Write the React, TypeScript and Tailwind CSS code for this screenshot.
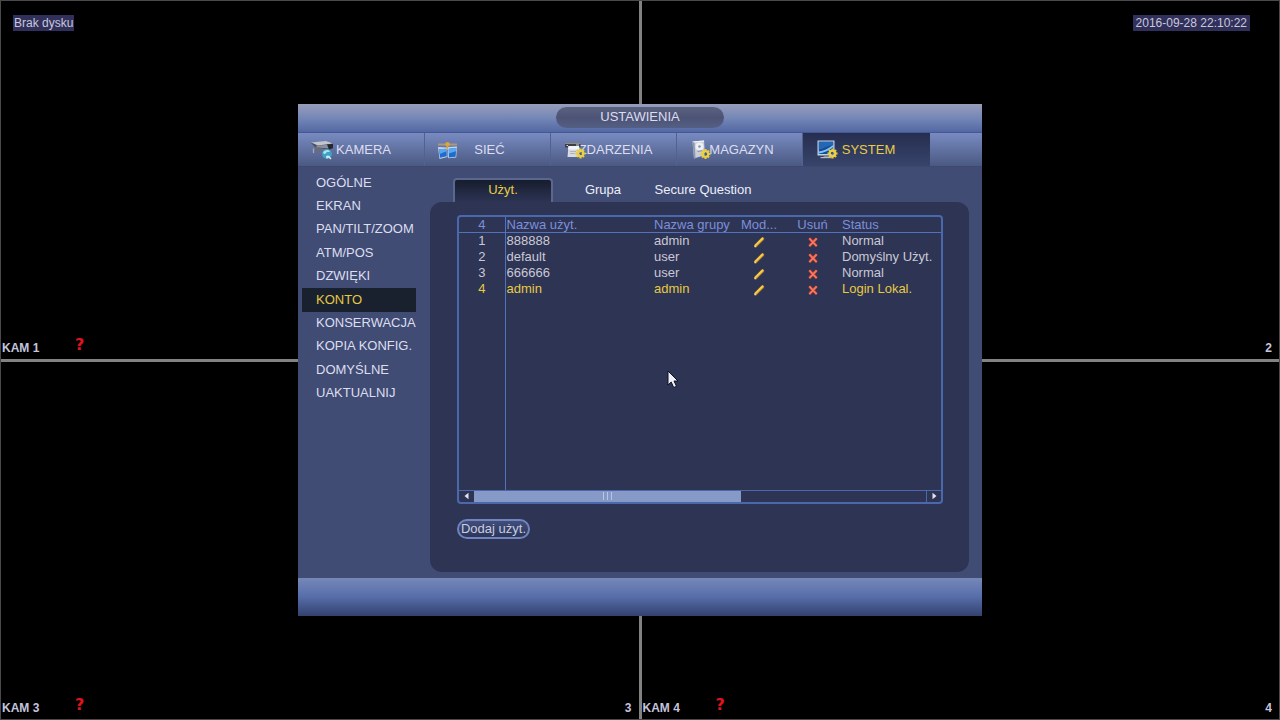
import React from 'react';

type IconProps = { className?: string };

const GEAR_TEETH = [0, 45, 90, 135, 180, 225, 270, 315];

const Gear = ({ cx, cy }: { cx: number; cy: number }) => (
  <g transform={`translate(${cx} ${cy})`}>
    {GEAR_TEETH.map((angle) => (
      <rect key={angle} x="-1.1" y="-5" width="2.2" height="3" fill="#e6c93a" transform={`rotate(${angle})`} />
    ))}
    <circle r="2.7" fill="none" stroke="#ecd23f" strokeWidth="1.9" />
    <circle r="1.2" fill="#4f5a70" />
  </g>
);

const CameraIcon: React.FC<IconProps> = ({ className }) => (
  <svg className={className} viewBox="0 0 24 24" aria-hidden="true">
    <path d="M0 4 16 2.500 22 5 22 9 18 11 4 8Z" fill="#4b4e5b" />
    <path d="M0 3.500 15 2 22 4.500 7 6.500Z" fill="#c3c5ce" />
    <path d="M5 6.800 20 5.500 19 9.500 6 8.500Z" fill="#8b8f9e" />
    <path d="M16 5.500 22 4.800V9L18 10.500Z" fill="#25262e" />
    <path d="M5 8.500 3.500 12 6 14 11 11.500 10 9Z" fill="#686b78" />
    <path d="M2.500 9.500V14" stroke="#a9acb6" strokeWidth="1.200" />
    <circle cx="16" cy="15" r="5" fill="#3f9fc4" />
    <path d="M12 13.500c2-3 5-3 7-1.500-1 2-3 0-4 2s-2 1-3-.5Z" fill="#a9e3ef" />
    <path d="M15 17c2-1 3-.5 4 .5-1 1.500-2.500 2-3.500 2Z" fill="#c5edf3" />
    <path d="m18 18 2 2" stroke="#dfe7ef" strokeWidth="1.500" />
  </svg>
);

const NetworkIcon: React.FC<IconProps> = ({ className }) => (
  <svg className={className} viewBox="0 0 24 24" aria-hidden="true">
    <path d="M1 4.500h19v2H1z" fill="#a99a78" />
    <circle cx="10.500" cy="5.300" r="2.300" fill="#dfa436" />
    <path d="M10.500 6v5" stroke="#dfa436" strokeWidth="1.500" />
    <path d="m1 8 9 .5.5 9.500L2.500 20Z" fill="#c6d3e6" />
    <path d="m2 10.200 7.500-.5.300 7.500L3 18.700Z" fill="#1c6dd0" />
    <path d="m2 10.200 7.500-.5v2.500L2.500 15Z" fill="#5ba7ee" />
    <path d="m11 8 9-.5-.8 11-8 .8Z" fill="#c6d3e6" />
    <path d="m11.800 9.700 7.500-.7-.7 8.700-6.600.8Z" fill="#1c6dd0" />
    <path d="m11.800 9.700 7.500-.7-.3 3.200-7.200 2.300Z" fill="#5ba7ee" />
  </svg>
);

const EventIcon: React.FC<IconProps> = ({ className }) => (
  <svg className={className} viewBox="0 0 24 24" aria-hidden="true">
    <path d="M2 3.500h15.500v5H2z" fill="#3c3e47" />
    <path d="M2 3.500h15.500v1.300H2z" fill="#9da1ad" />
    <path d="M3.500 6.500H5M13 6h3" stroke="#d9dbe2" strokeWidth="1" />
    <path d="M5.500 7H16l1.500 11H4.500Z" fill="#d8dbe2" />
    <path d="M5.500 7H16l.5 3.500H5Z" fill="#f3f4f7" />
    <path d="M7 12.500h6M7 14.500h5" stroke="#a3a8b5" strokeWidth=".8" />
    <Gear cx={17.500} cy={14.500} />
  </svg>
);

const StorageIcon: React.FC<IconProps> = ({ className }) => (
  <svg className={className} viewBox="0 0 24 24" aria-hidden="true">
    <path d="M3.500 2.500 15 1.500 16 16 5 19.500Z" fill="#c9ced9" />
    <path d="M3.500 2.500 5.500 3 6.500 19 5 19.500Z" fill="#8f98aa" />
    <path d="M3.500 2.500 15 1.500l.2 1.200L5 3.500Z" fill="#f2f4f8" />
    <circle cx="10.500" cy="7.500" r="4" fill="#edf0f5" />
    <circle cx="10.500" cy="7.500" r="1.300" fill="#8c94a5" />
    <path d="m8.500 12.500 5-.8" stroke="#8c94a5" strokeWidth="1.200" />
    <Gear cx={16.500} cy={15} />
  </svg>
);

const SystemIcon: React.FC<IconProps> = ({ className }) => (
  <svg className={className} viewBox="0 0 24 24" aria-hidden="true">
    <rect x="2.500" y="1.500" width="17" height="15" fill="#c3d3e6" />
    <rect x="3.800" y="2.700" width="14.400" height="12.300" fill="#164a94" />
    <path d="M3.800 2.700h14.400v3.500C12 6.500 9 10 3.800 10.500Z" fill="#2468b4" />
    <path d="M3.800 12.500c5-.5 9-3 14.400-6.500v2C13 12 9 14 3.800 14.500Z" fill="#7fc4f3" />
    <path d="M8.500 16.500h5V18h-5z" fill="#7e8798" />
    <path d="M5.500 18h11v1.200h-11z" fill="#b4bcc8" />
    <Gear cx={17.500} cy={14.500} />
  </svg>
);

const PencilIcon = () => (
  <svg className="h-3 w-3" viewBox="0 0 12 12" aria-hidden="true">
    <path d="M2.600 9.800 9.600 2.800" stroke="#b9812a" strokeWidth="3.200" strokeLinecap="round" />
    <path d="M2.500 9.400 9.400 2.500" stroke="#f2d04c" strokeWidth="1.900" strokeLinecap="round" />
    <path d="m1.500 10.600 1.500-.2" stroke="#ded5c2" strokeWidth="1.200" />
  </svg>
);

const DeleteIcon = () => (
  <svg className="h-3 w-3" viewBox="0 0 12 12" aria-hidden="true">
    <path d="m2.300 2.300 7.400 7.800M9.700 2.300 2.300 10.100" stroke="#a8352f" strokeWidth="3" />
    <path d="m2.300 2.300 7.400 7.800M9.700 2.300 2.300 10.100" stroke="#f47a62" strokeWidth="1.700" />
  </svg>
);

const sections = [
  { label: 'KAMERA', Icon: CameraIcon },
  { label: 'SIEĆ', Icon: NetworkIcon },
  { label: 'ZDARZENIA', Icon: EventIcon },
  { label: 'MAGAZYN', Icon: StorageIcon },
  { label: 'SYSTEM', Icon: SystemIcon, active: true },
];

const menu = [
  'OGÓLNE',
  'EKRAN',
  'PAN/TILT/ZOOM',
  'ATM/POS',
  'DZWIĘKI',
  'KONTO',
  'KONSERWACJA',
  'KOPIA KONFIG.',
  'DOMYŚLNE',
  'UAKTUALNIJ',
];

const tabs = ['Użyt.', 'Grupa', 'Secure Question'];

const users = [
  { id: 1, name: '888888', group: 'admin', status: 'Normal' },
  { id: 2, name: 'default', group: 'user', status: 'Domyślny Użyt.' },
  { id: 3, name: '666666', group: 'user', status: 'Normal' },
  { id: 4, name: 'admin', group: 'admin', status: 'Login Lokal.' },
];

interface CameraViewProps {
  name?: string;
  number?: string;
  children?: React.ReactNode;
}

const CameraView: React.FC<CameraViewProps> = ({ name, number, children }) => (
  <section className="flex flex-col justify-between bg-black text-xs font-bold text-[#c4c4dc]">
    <div className="flex px-3 pt-[14px] font-normal">{children}</div>
    <div className="flex items-end pb-1 pl-px pr-[7px] leading-[14px]">
      {name && (
        <>
          <span className="w-[73px]">{name}</span>
          <span className="pb-[2px] font-['DejaVu_Sans',sans-serif] text-base leading-4 text-[#e0141c]">?</span>
        </>
      )}
      <span className="ml-auto">{number}</span>
    </div>
  </section>
);

const UserTable = () => (
  <div className="overflow-hidden rounded-[4px] border-2 border-[#4c68ad]">
    <table className="w-full table-fixed border-collapse text-left text-[13px] leading-4 text-[#c9c9d6]">
      <colgroup>
        <col className="w-[46px]" />
        <col className="w-[148px]" />
        <col className="w-[81px]" />
        <col className="w-[50px]" />
        <col className="w-[57px]" />
        <col />
      </colgroup>
      <thead>
        <tr className="h-[15px] border-b border-[#5272bd] leading-[14px] text-[#7b8fdc]">
          <th className="border-r border-[#5272bd] p-0 text-center font-normal">4</th>
          <th className="p-0 pl-px font-normal">Nazwa użyt.</th>
          <th className="p-0 pl-px font-normal">Nazwa grupy</th>
          <th className="p-0 text-center font-normal">Mod...</th>
          <th className="p-0 text-center font-normal">Usuń</th>
          <th className="p-0 pl-px font-normal">Status</th>
        </tr>
      </thead>
      <tbody>
        {users.map((user) => (
          <tr key={user.id} className={user.id === 4 ? 'h-4 text-[#e6cb42]' : 'h-4'}>
            <td className="border-r border-[#5272bd] p-0 text-center">{user.id}</td>
            <td className="p-0 pl-px">{user.name}</td>
            <td className="p-0 pl-px">{user.group}</td>
            <td className="p-0">
              <button type="button" aria-label="Mod..." className="mx-auto block pt-[2px]">
                <PencilIcon />
              </button>
            </td>
            <td className="p-0">
              <button type="button" aria-label="Usuń" className="mx-auto block pt-[2px]">
                <DeleteIcon />
              </button>
            </td>
            <td className="whitespace-nowrap p-0 pl-px">{user.status}</td>
          </tr>
        ))}
        <tr className="h-[193px]">
          <td className="border-r border-[#5272bd] p-0" />
          <td colSpan={5} className="p-0" />
        </tr>
      </tbody>
    </table>

    <div className="flex h-3 border-t border-[#4c68ad]">
      <button type="button" aria-label="Przewiń w lewo" className="flex w-[15px] items-center justify-center">
        <svg className="h-2 w-2" viewBox="0 0 8 8" aria-hidden="true">
          <path d="M5.500.8v6.400L1.500 4Z" fill="#e3e3ee" />
        </svg>
      </button>
      <div className="flex-1">
        <div className="flex h-full w-[59%] items-center justify-center gap-[3px] bg-[#8799c6]">
          <span className="h-2 w-px bg-[#b8c4e4]" />
          <span className="h-2 w-px bg-[#b8c4e4]" />
          <span className="h-2 w-px bg-[#b8c4e4]" />
        </div>
      </div>
      <button
        type="button"
        aria-label="Przewiń w prawo"
        className="flex w-[15px] items-center justify-center border-l border-[#4c68ad]"
      >
        <svg className="h-2 w-2" viewBox="0 0 8 8" aria-hidden="true">
          <path d="M2.500.8v6.400L6.500 4Z" fill="#e3e3ee" />
        </svg>
      </button>
    </div>
  </div>
);

const SettingsWindow = () => (
  <div className="relative w-full max-w-[684px] bg-[#404c73] text-[13px] text-[#dcdef0]">
    <header className="flex h-7 items-center justify-center bg-linear-to-b from-[#989db9] via-[#7587b7] to-[#5368a3] pb-[2px]">
      <h1 className="h-[21px] w-[168px] rounded-full bg-linear-to-b from-[#5b6180] via-[#4c5375] to-[#545f85] text-center leading-5">
        USTAWIENIA
      </h1>
    </header>

    <nav className="flex h-[35px] border-y border-t-[#46588f] border-b-[#3b4870] bg-linear-to-b from-[#788bc2] to-[#4b5982] pl-px">
      {sections.map(({ label, Icon, active }) => (
        <a
          key={label}
          href="#"
          className={
            active
              ? 'relative flex w-[127px] items-center justify-center bg-linear-to-b from-[#262e50] to-[#38446b] pl-1 text-[#e8cc45]'
              : 'relative flex w-[126px] items-center justify-center border-r border-[#52628f] pl-1'
          }
        >
          {label}
          <Icon className="absolute left-3 top-[6px] h-6 w-6" />
        </a>
      ))}
    </nav>

    <div className="flex gap-[14px] pb-[6px] pl-1 pr-[13px]">
      <ul className="mt-1 grid h-[234px] w-[114px] auto-rows-fr">
        {menu.map((item) => (
          <li key={item} className="grid">
            <a
              href="#"
              className={
                item === 'KONTO'
                  ? 'flex items-center bg-[#19212f] pb-px pl-[14px] text-[#e6c940]'
                  : 'flex items-center whitespace-nowrap pb-px pl-[14px]'
              }
            >
              {item}
            </a>
          </li>
        ))}
      </ul>

      <main className="flex-1 pt-[11px]">
        <div role="tablist" className="flex h-6 pl-[23px]">
          {tabs.map((tab, i) => (
            <button
              key={tab}
              type="button"
              role="tab"
              aria-selected={i === 0}
              className={
                i === 0
                  ? 'w-[100px] rounded-t-[4px] border-2 border-b-0 border-[#5b678c] bg-linear-to-b from-[#161d2e] to-[#2d3454] pb-1 text-[#e8cc45]'
                  : 'w-[100px] whitespace-nowrap pb-[2px] text-[#eceefa]'
              }
            >
              {tab}
            </button>
          ))}
        </div>
        <div className="rounded-xl bg-[#2e3454] pb-[33px] pl-[27px] pr-[26px] pt-[13px]">
          <UserTable />
          <button
            type="button"
            className="mt-[15px] block h-5 w-[73px] whitespace-nowrap rounded-full border-2 border-[#7184bd] bg-linear-to-b from-[#414e7a] to-[#2b3659] text-center leading-[14px] text-[#c9cde0]"
          >
            Dodaj użyt.
          </button>
        </div>
      </main>
    </div>

    <footer className="h-[38px] bg-linear-to-b from-[#7688b9] via-[#566da9] to-[#33426f]" />

    <svg className="absolute left-[369px] top-[266px] h-5 w-4" viewBox="0 0 16 20" aria-hidden="true">
      <path
        d="M1 1v14l3.200-3 2.500 5.500 2.800-1.200L7 11h4Z"
        fill="#f0f0f8"
        stroke="#0e1226"
        strokeWidth="1"
      />
    </svg>
  </div>
);

export default function App() {
  return (
    <div className="relative h-screen overflow-hidden bg-[#828282] font-['Liberation_Sans',Arial,sans-serif]">
      <div className="grid h-full grid-cols-2 grid-rows-2 gap-[3px] border border-[#4a4a4a]">
        <CameraView name="KAM 1">
          <span className="bg-[#30305a] px-px text-xs leading-4 text-[#c8c8dc]">Brak dysku</span>
        </CameraView>
        <CameraView number="2">
          <time className="ml-auto mr-[17px] bg-[#30305a] px-[3px] text-xs leading-4 text-[#c8c8dc]">
            2016-09-28 22:10:22
          </time>
        </CameraView>
        <CameraView name="KAM 3" number="3" />
        <CameraView name="KAM 4" number="4" />
      </div>

      <div className="absolute inset-0 grid place-items-center">
        <SettingsWindow />
      </div>
    </div>
  );
}
